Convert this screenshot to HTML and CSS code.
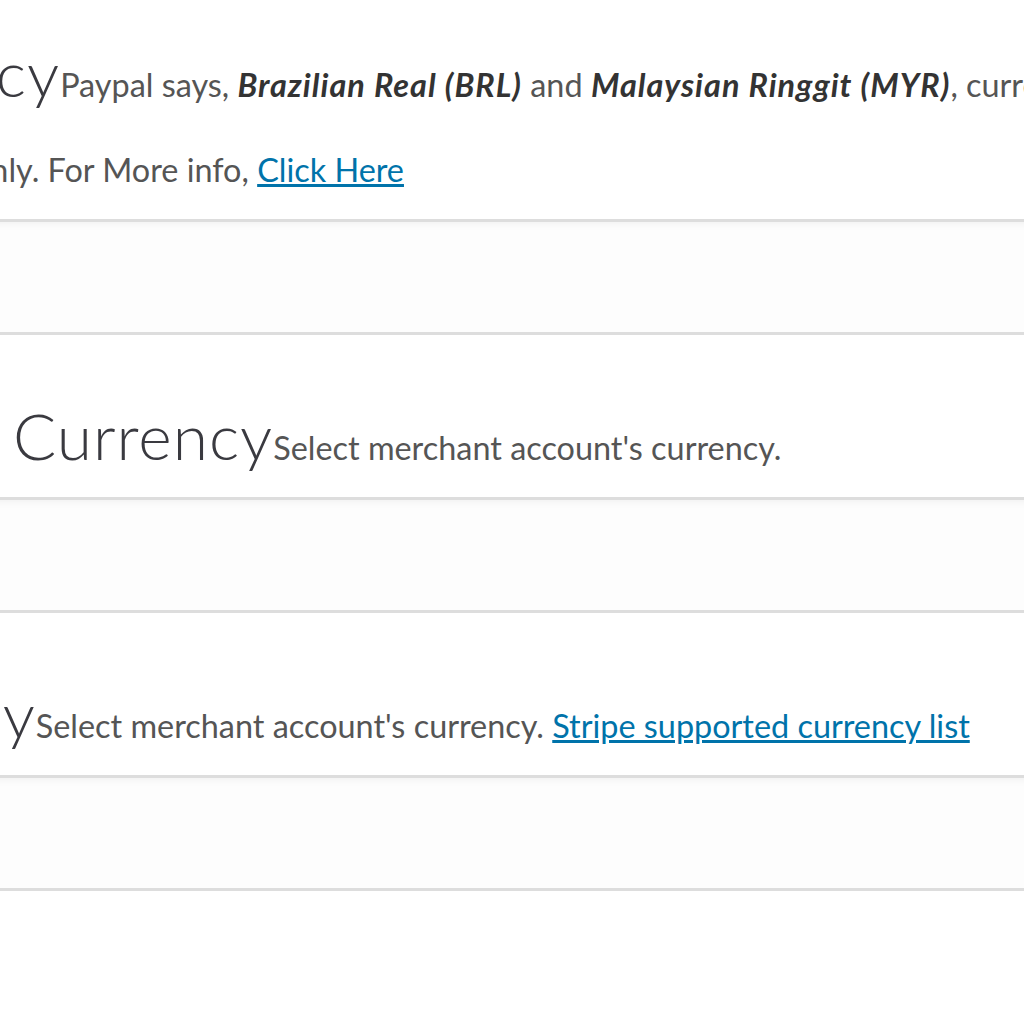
FILE: index.html
```html
<!DOCTYPE html>
<html lang="en">
<head>
  <meta charset="UTF-8">
  <title>Payment Settings</title>
  <link rel="stylesheet" href="styles.css">
</head>
<body>
  <div class="settings">
    <div class="field field--paypal">
      <h2 class="field-title">PayPal Currency<span class="field-desc">Paypal says, <strong><em>Brazilian Real (BRL)</em></strong> and <strong><em>Malaysian Ringgit (MYR)</em></strong>, currencies are supported for in-country PayPal accounts<br>only. For More info, <a href="#">Click Here</a></span></h2>
    </div>
    <div class="field-gap"></div>

    <div class="field field--merchant">
      <h2 class="field-title">Razorpay Currency<span class="field-desc">Select merchant account's currency.</span></h2>
    </div>
    <div class="field-gap"></div>

    <div class="field field--stripe">
      <h2 class="field-title">Stripe Currency<span class="field-desc">Select merchant account's currency. <a href="#">Stripe supported currency list</a></span></h2>
    </div>
    <div class="field-gap"></div>
  </div>
</body>
</html>
```

FILE: styles.css
```css
body {
  margin: 0;
  background: #fff;
  font-family: 'Lato', 'Open Sans', sans-serif;
  color: #444;
  overflow: hidden;
}

.settings {
  margin: -28px 0 0 -28px;
  width: 1400px;
}

.field {
  padding: 58px 0 19px;
}

.field-title {
  margin: 0;
  font-size: 64px;
  font-weight: 300;
  letter-spacing: 1px;
  line-height: 85px;
  color: #3a3a40;
  white-space: nowrap;
}

/* hidden gateway names sit past the left edge */
.field--paypal .field-title {
  text-indent: -375px;
}

.field--merchant .field-title {
  text-indent: -237px;
}

.field--stripe .field-title {
  text-indent: -381px;
}

.field-desc {
  font-size: 32.4px;
  font-weight: 400;
  letter-spacing: 0;
  line-height: 1;
  color: #555;
}

.field-desc strong {
  font-weight: 700;
  color: #333;
  letter-spacing: 1px;
}

.field-desc a {
  color: #0073aa;
  text-decoration: underline;
}

.field-gap {
  height: 110px;
  border-top: 3px solid #dddddd;
  border-bottom: 3px solid #dddddd;
  background: #fdfdfd;
  box-shadow: inset 0 6px 8px -4px rgba(0, 0, 0, 0.05);
}
```
